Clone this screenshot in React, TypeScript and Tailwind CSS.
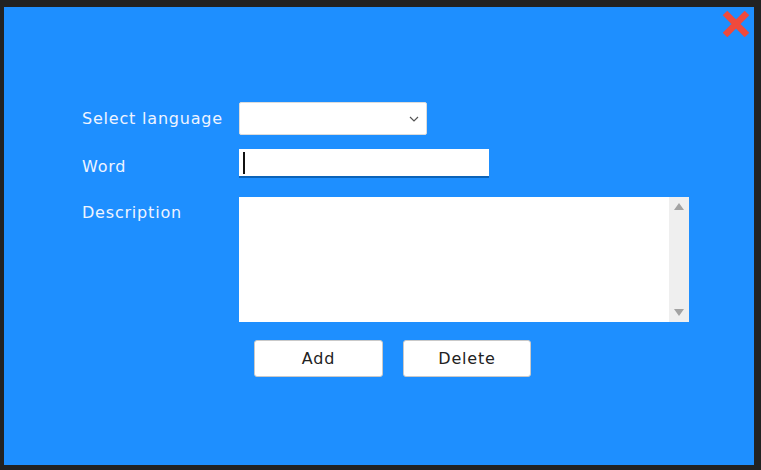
import React from "react";

export default function App() {
  return (
    <div
      className="w-[761px] h-[470px] bg-[#222222] pt-[7px] pl-[4px] pr-[7px] pb-[5px]"
      style={{ fontFamily: '"DejaVu Sans", sans-serif' }}
    >
      <div className="relative w-full h-full bg-[#1e8fff] pl-[78px] pt-[95px] tracking-[0.8px]">
        <button className="absolute top-[2px] right-[3px] w-[30px] h-[30px]">
          <svg width="30" height="30" viewBox="0 0 30 30">
            <path d="M4 4 L26 26 M26 4 L4 26" stroke="#f04a3c" strokeWidth="6.5" strokeLinecap="butt" />
          </svg>
        </button>

        <div className="flex">
          <div className="w-[157px] h-[33px] flex items-center text-[16px] text-[#eef4ff]">Select language</div>
          <div className="w-[188px] h-[33px] bg-white border border-[#dcdcdc] rounded-[2px] flex items-center justify-end pr-[7px]">
            <svg width="10" height="6" viewBox="0 0 10 6">
              <path d="M1 1 L5 5 L9 1" stroke="#555" strokeWidth="1.2" fill="none" />
            </svg>
          </div>
        </div>

        <div className="flex mt-[14px]">
          <div className="w-[157px] h-[29px] flex items-center pt-[7px] text-[16px] text-[#eef4ff]">Word</div>
          <div className="w-[250px] h-[29px] bg-white border-b-[2px] border-[#0b63b8] flex items-center pl-[4px]">
            <div className="w-[2px] h-[22px] bg-[#111]" />
          </div>
        </div>

        <div className="flex mt-[19px]">
          <div className="w-[157px] pt-[6px] text-[16px] leading-[20px] text-[#eef4ff]">Description</div>
          <div className="w-[450px] h-[125px] bg-white flex justify-end">
            <div className="w-[20px] h-full bg-[#efefef] flex flex-col items-center justify-between py-[6px]">
              <svg width="10" height="7" viewBox="0 0 10 7">
                <path d="M0 7 L5 0 L10 7 Z" fill="#a3a3a3" />
              </svg>
              <svg width="10" height="7" viewBox="0 0 10 7">
                <path d="M0 0 L5 7 L10 0 Z" fill="#a3a3a3" />
              </svg>
            </div>
          </div>
        </div>

        <div className="flex mt-[18px] ml-[172px] gap-[20px]">
          <button className="w-[129px] h-[37px] bg-white border border-[#c9c9c9] rounded-[3px] text-[16px] text-[#222]">Add</button>
          <button className="w-[128px] h-[37px] bg-white border border-[#c9c9c9] rounded-[3px] text-[16px] text-[#222]">Delete</button>
        </div>
      </div>
    </div>
  );
}
